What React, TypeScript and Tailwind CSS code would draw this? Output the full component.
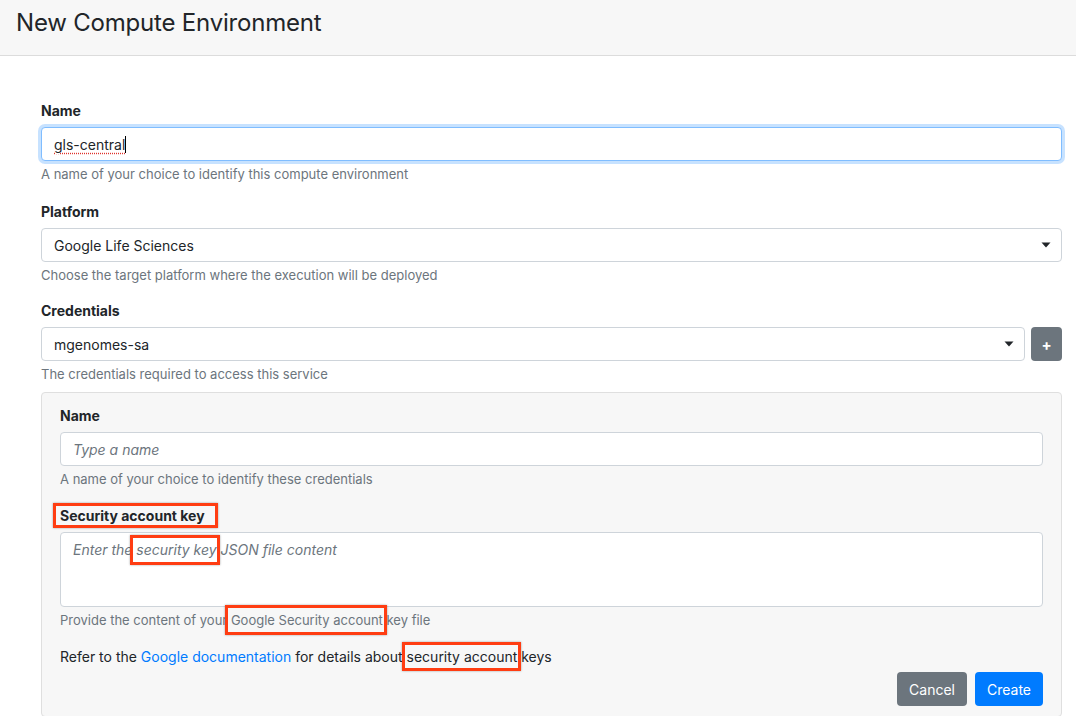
import React from "react";

const Caret = () => (
  <svg width="10" height="6" viewBox="0 0 10 6" className="shrink-0">
    <path d="M0.5 0.5 L9.5 0.5 L5 5.5 Z" fill="#212529" />
  </svg>
);

const Hl = ({ children, box }: { children: React.ReactNode; box: string }) => (
  <span className="relative">
    {children}
    <span className={`pointer-events-none absolute border-[3px] border-[#ff3d12] shadow-[0_0_2px_rgba(0,0,0,0.35)] ${box}`} />
  </span>
);

export default function App() {
  return (
    <div className="min-h-[716px] bg-white text-[#212529] font-['Inter','Helvetica_Neue',sans-serif]">
      <div className="h-[56px] bg-[#f7f7f7] border-b border-[#dcdcdc] pl-[16px] flex items-start pt-[7px]">
        <h1 className="text-[24px] leading-[32px] font-normal tracking-[-0.2px]">New Compute Environment</h1>
      </div>

      <div className="pl-[41px] pr-[14px] pt-[44px]">
        {/* Name */}
        <div className="mb-[17px]">
          <label className="block text-[14px] leading-[21px] font-bold mb-[6px]">Name</label>
          <div className="h-[34px] rounded-[4px] border border-[#80bdff] shadow-[0_0_0_3px_rgba(0,123,255,0.22)] bg-white flex items-center px-[12px] text-[14px]">
            <span className="underline decoration-dotted decoration-[#e0312b] underline-offset-[3px]">gls-central</span>
            <span className="inline-block w-px h-[17px] bg-black" />
          </div>
          <p className="mt-[4px] text-[13px] leading-[19px] text-[#6c757d]">
            A name of your choice to identify this compute environment
          </p>
        </div>

        {/* Platform */}
        <div className="mb-[15px]">
          <label className="block text-[14px] leading-[21px] font-bold mb-[6px]">Platform</label>
          <div className="h-[34px] rounded-[4px] border border-[#ced4da] bg-white flex items-center justify-between pl-[12px] pr-[10px] text-[14px]">
            <span>Google Life Sciences</span>
            <Caret />
          </div>
          <p className="mt-[4px] text-[13px] leading-[19px] text-[#6c757d]">
            Choose the target platform where the execution will be deployed
          </p>
        </div>

        {/* Credentials */}
        <div>
          <label className="block text-[14px] leading-[21px] font-bold mb-[6px]">Credentials</label>
          <div className="flex gap-[6px]">
            <div className="flex-1 h-[34px] rounded-[4px] border border-[#ced4da] bg-white flex items-center justify-between pl-[12px] pr-[10px] text-[14px]">
              <span>mgenomes-sa</span>
              <Caret />
            </div>
            <button className="w-[31px] h-[34px] rounded-[4px] bg-[#6c757d] text-white text-[15px] font-bold leading-none flex items-center justify-center">
              +
            </button>
          </div>
          <p className="mt-[4px] text-[13px] leading-[19px] text-[#6c757d]">
            The credentials required to access this service
          </p>
        </div>

        {/* Panel */}
        <div className="mt-[8px] bg-[#f7f7f7] border border-[#dfdfdf] rounded-[4px] pt-[12px] px-[18px] pb-[10px]">
          <div className="mb-[16px]">
            <label className="block text-[14px] leading-[21px] font-bold mb-[6px]">Name</label>
            <div className="h-[34px] rounded-[4px] border border-[#ced4da] bg-white flex items-center px-[12px] text-[14px] italic text-[#6c757d]">
              Type a name
            </div>
            <p className="mt-[4px] text-[13px] leading-[19px] text-[#6c757d]">
              A name of your choice to identify these credentials
            </p>
          </div>

          <div className="mb-[16px]">
            <label className="block text-[14px] leading-[21px] font-bold mb-[6px]">
              <Hl box="-left-[7px] -right-[13px] -top-[4px] -bottom-[4px]">Security account key</Hl>
            </label>
            <div className="h-[75px] rounded-[4px] border border-[#ced4da] bg-white px-[12px] pt-[6px] text-[14px] leading-[21px] italic text-[#6c757d]">
              Enter the{" "}
              <Hl box="-left-[6px] -right-[3px] -top-[6px] -bottom-[7px]">security key</Hl> JSON file content
            </div>
            <p className="mt-[4px] text-[13px] leading-[19px] text-[#6c757d]">
              Provide the content of your{" "}
              <Hl box="-left-[6px] -right-[4px] -top-[7px] -bottom-[7px]">Google Security account</Hl> key file
            </p>
          </div>

          <p className="text-[14px] leading-[21px] mb-[5px]">
            Refer to the <span className="text-[#007bff]">Google documentation</span> for details about{" "}
            <Hl box="-left-[5px] -right-[4px] -top-[6px] -bottom-[6px]">security account</Hl> keys
          </p>

          <div className="flex justify-end gap-[8px]">
            <button className="h-[34px] px-[12px] rounded-[4px] bg-[#6c757d] text-white text-[14px]">Cancel</button>
            <button className="h-[34px] px-[12px] rounded-[4px] bg-[#007bff] text-white text-[14px]">Create</button>
          </div>
        </div>
      </div>
    </div>
  );
}
